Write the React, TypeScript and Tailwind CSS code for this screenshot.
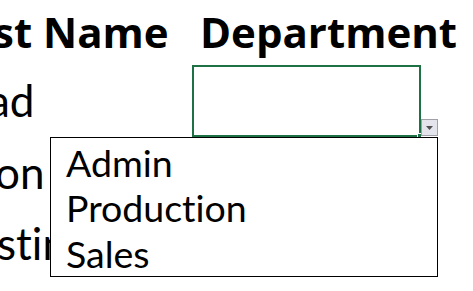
import React from "react"

const headFont = { fontFamily: "'Open Sans', 'Noto Sans', sans-serif" }
const cellFont = { fontFamily: "Lato, 'Liberation Sans', sans-serif" }

// visible tail of each name (column A is scrolled off to the left)
const rows = [
  { name: "ad", ml: "-ml-[12px]" },
  { name: "on", ml: "-ml-[5px]" },
  { name: "stin", ml: "-ml-[3px]" },
]
const options = ["Admin", "Production", "Sales"]

export default function App() {
  return (
    <div
      className="relative w-[473px] h-[291px] overflow-hidden bg-white text-black [font-variant-ligatures:none]"
      style={cellFont}
    >
      {/* header row */}
      <div className="grid grid-cols-[192px_229px_1fr] h-[65px]" style={headFont}>
        <div className="pt-[11px] overflow-hidden whitespace-nowrap">
          <span className="block text-[42px] leading-[42px] font-bold -ml-[7px]">st Name</span>
        </div>
        <div className="pt-[11px] whitespace-nowrap">
          <span className="block text-[42px] leading-[42px] font-bold ml-[8px]">Department</span>
        </div>
        <div />
      </div>

      {rows.map((r, i) => (
        <div key={r.name} className="grid grid-cols-[192px_229px_1fr] h-[71.5px]">
          <div className="pt-[13px] overflow-hidden whitespace-nowrap">
            <span className={`block text-[44px] leading-[44px] ${r.ml}`}>{r.name}</span>
          </div>
          {i === 0 ? (
            <div className="relative border-2 border-[#1e7145]">
              <div className="absolute -right-[3px] -bottom-[3px] w-[5px] h-[5px] bg-[#1e7145] border border-white" />
            </div>
          ) : (
            <div />
          )}
          <div />
        </div>
      ))}

      {/* dropdown arrow */}
      <div className="absolute left-[421px] top-[119px] w-[17px] h-[17px] bg-[#e4e4ec] border border-[#a0a0a8] flex items-center justify-center">
        <svg width="7" height="4" viewBox="0 0 7 4">
          <path d="M0 0h7L3.5 4z" fill="#505050" />
        </svg>
      </div>

      {/* validation list */}
      <div className="absolute left-[50px] top-[137px] w-[388px] h-[140px] bg-white border border-black pl-[15px] pt-[1.5px]">
        {options.map((o) => (
          <div key={o} className="text-[37.5px] leading-[45.5px]">
            {o}
          </div>
        ))}
      </div>
    </div>
  )
}
